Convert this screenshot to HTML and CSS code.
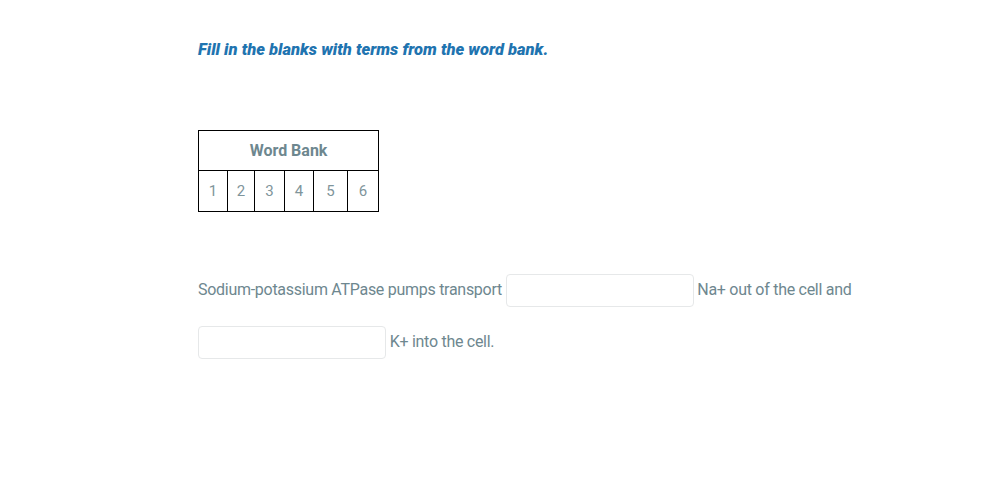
FILE: index.html
```html
<!DOCTYPE html>
<html lang="en">
<head>
<meta charset="utf-8">
<link rel="stylesheet" href="styles.css">
</head>
<body>
<main class="page">
  <h1 class="prompt">Fill in the blanks with terms from the word bank.</h1>
  <table class="bank">
    <colgroup>
      <col class="c1"><col class="c2"><col class="c3"><col class="c4"><col class="c5"><col class="c6">
    </colgroup>
    <thead>
      <tr><th colspan="6">Word Bank</th></tr>
    </thead>
    <tbody>
      <tr><td>1</td><td>2</td><td>3</td><td>4</td><td>5</td><td>6</td></tr>
    </tbody>
  </table>
  <p class="sentence">Sodium-potassium ATPase pumps transport <input class="blank" type="text"> Na+ out of the cell and <input class="blank" type="text"> K+ into the cell.</p>
</main>
</body>
</html>
```
FILE: styles.css
```css
html, body {
  margin: 0;
  padding: 0;
  background: #ffffff;
}
.page {
  padding: 40px 0 0 198px;
  width: 680px;
  font-family: Roboto, "Noto Sans", sans-serif;
  color: #6e878f;
}
.prompt {
  margin: 0;
  font-size: 16.5px;
  line-height: 20px;
  font-style: italic;
  font-weight: 900;
  letter-spacing: 0.02px;
  color: #1f74b0;
}
.bank {
  margin-top: 70px;
  border-collapse: collapse;
  table-layout: fixed;
  width: 181px;
}
.bank .c1 { width: 29px; }
.bank .c2 { width: 27px; }
.bank .c3 { width: 30px; }
.bank .c4 { width: 29px; }
.bank .c5 { width: 34px; }
.bank .c6 { width: 31px; }
.bank th {
  border: 1px solid #000;
  height: 39px;
  padding: 0;
  font-size: 16px;
  font-weight: 700;
  color: #6e878f;
}
.bank td {
  border: 1px solid #000;
  height: 40px;
  padding: 0;
  text-align: center;
  font-size: 15px;
  font-weight: 400;
  color: #7f959b;
}
.sentence {
  margin: 52px 0 0;
  font-size: 16px;
  line-height: 52px;
  letter-spacing: -0.28px;
}
.blank {
  box-sizing: border-box;
  width: 188px;
  height: 33px;
  border: 1px solid #e6e8e9;
  border-radius: 4px;
  vertical-align: middle;
  margin: 0;
  padding: 0 8px;
}
```
